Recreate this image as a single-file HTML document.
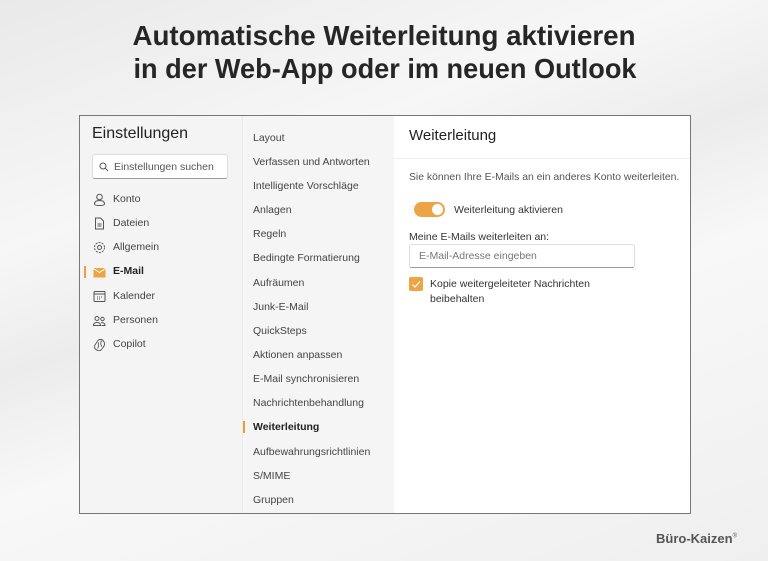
<!DOCTYPE html>
<html><head><meta charset="utf-8"><style>
*{margin:0;padding:0;box-sizing:border-box}
body{width:768px;height:561px;overflow:hidden;background:linear-gradient(160deg,#e9e9e9 0%,#f7f7f7 30%,#ececec 45%,#f8f8f8 60%,#efefef 100%);font-family:"Liberation Sans",sans-serif;position:relative;color:#333}
.abs{position:absolute}
.panel{left:79px;top:115px;width:612px;height:399px;border:1px solid #777;background:#f4f4f4}
.mid{left:162px;top:0;width:152px;height:397px;border-left:1px solid #ebebeb;background:#f5f5f5}
.right{left:314px;top:0;width:296px;height:397px;background:#fff}
.t{font-size:10.5px;color:#444;white-space:nowrap}
.ic{position:absolute;left:13px;width:13px;height:13px}
</style></head><body>
<svg class="abs" style="left:0;top:0" width="768" height="100">
<text x="384" y="45" text-anchor="middle" font-family="Liberation Sans" font-weight="bold" font-size="28" fill="#262626" textLength="503" lengthAdjust="spacingAndGlyphs">Automatische Weiterleitung aktivieren</text>
<text x="385" y="78" text-anchor="middle" font-family="Liberation Sans" font-weight="bold" font-size="28" fill="#262626" textLength="503" lengthAdjust="spacingAndGlyphs">in der Web-App oder im neuen Outlook</text>
</svg>
<div class="abs panel">
 <div class="abs" style="left:12px;top:9px;font-size:16px;color:#222">Einstellungen</div>
 <div class="abs" style="left:12px;top:38px;width:136px;height:25px;background:#fff;border:1px solid #ddd;border-bottom:1px solid #999;border-radius:3px">
  <svg class="abs" style="left:6px;top:7px" width="10" height="10"><circle cx="4" cy="4" r="3" fill="none" stroke="#555" stroke-width="1"/><path d="M6.3 6.3L9 9" stroke="#555"/></svg>
  <div class="abs t" style="left:21px;top:6px;color:#555">Einstellungen suchen</div>
 </div>
 <svg class="ic" style="top:77px" viewBox="0 0 13 13"><circle cx="6.5" cy="4" r="2.8" fill="none" stroke="#555"/><path d="M1.5 11c0-2.5 2-3.5 5-3.5s5 1 5 3.5c0 1-2 1.5-5 1.5s-5-.5-5-1.5z" fill="none" stroke="#555"/></svg>
 <div class="abs t" style="left:33px;top:77px">Konto</div>
 <svg class="ic" style="top:101px" viewBox="0 0 13 13"><path d="M2.5 1h5l3 3v8h-8z" fill="none" stroke="#555"/><path d="M4.5 7h4M4.5 9h4" stroke="#555"/></svg>
 <div class="abs t" style="left:33px;top:101px">Dateien</div>
 <svg class="ic" style="top:125px" viewBox="0 0 13 13"><circle cx="6.5" cy="6.5" r="2" fill="none" stroke="#555"/><circle cx="6.5" cy="6.5" r="5" fill="none" stroke="#555" stroke-dasharray="2 1.2"/></svg>
 <div class="abs t" style="left:33px;top:125px">Allgemein</div>
 <div class="abs" style="left:4px;top:150px;width:2px;height:12px;background:#e8a03c"></div>
 <svg class="ic" style="top:150px" viewBox="0 0 13 13"><rect x="0.5" y="2" width="12" height="9.5" fill="#eca444"/><path d="M0.5 2.5l6 4 6-4" fill="none" stroke="#fff"/></svg>
 <div class="abs t" style="left:33px;top:149px;font-weight:bold;color:#222">E-Mail</div>
 <svg class="ic" style="top:174px" viewBox="0 0 13 13"><rect x="1" y="1.5" width="11" height="10" rx="1" fill="none" stroke="#555"/><path d="M1 4h11M4 7h1M6 7h1M8 7h1M4 9h1M6 9h1" stroke="#555"/></svg>
 <div class="abs t" style="left:33px;top:174px">Kalender</div>
 <svg class="ic" style="top:198px" viewBox="0 0 13 13"><circle cx="4" cy="4.5" r="2" fill="none" stroke="#555"/><circle cx="9.5" cy="5" r="1.7" fill="none" stroke="#555"/><path d="M0.5 11.5c0-2 1.5-3 3.5-3s3.5 1 3.5 3zM8 8.5c2.5 0 4 .8 4 3h-3.5" fill="none" stroke="#555"/></svg>
 <div class="abs t" style="left:33px;top:198px">Personen</div>
 <svg class="ic" style="top:222px" viewBox="0 0 13 13"><path d="M3 11.5c-2-1-2-4 0-6l2-3c1-1.5 4-1.5 5 0 2 2 2 5 0 7l-2 2.5c-1 1-3.5 1-5-.5z M5 4.5c1 1 1 4-.5 6M8.5 2.5c-1 2-1 4.5.5 6" fill="none" stroke="#555" stroke-width=".9"/></svg>
 <div class="abs t" style="left:33px;top:222px">Copilot</div>
 <div class="abs mid">
  <div class="abs t" style="left:10px;top:16px">Layout</div>
  <div class="abs t" style="left:10px;top:40px">Verfassen und Antworten</div>
  <div class="abs t" style="left:10px;top:64px">Intelligente Vorschläge</div>
  <div class="abs t" style="left:10px;top:88px">Anlagen</div>
  <div class="abs t" style="left:10px;top:112px">Regeln</div>
  <div class="abs t" style="left:10px;top:136px">Bedingte Formatierung</div>
  <div class="abs t" style="left:10px;top:161px">Aufräumen</div>
  <div class="abs t" style="left:10px;top:185px">Junk-E-Mail</div>
  <div class="abs t" style="left:10px;top:209px">QuickSteps</div>
  <div class="abs t" style="left:10px;top:233px">Aktionen anpassen</div>
  <div class="abs t" style="left:10px;top:257px">E-Mail synchronisieren</div>
  <div class="abs t" style="left:10px;top:281px">Nachrichtenbehandlung</div>
  <div class="abs" style="left:0;top:305px;width:2px;height:12px;background:#e8a03c"></div>
  <div class="abs t" style="left:10px;top:305px;font-weight:bold;color:#222">Weiterleitung</div>
  <div class="abs t" style="left:10px;top:330px">Aufbewahrungsrichtlinien</div>
  <div class="abs t" style="left:10px;top:354px">S/MIME</div>
  <div class="abs t" style="left:10px;top:378px">Gruppen</div>
 </div>
 <div class="abs right">
  <div class="abs" style="left:15px;top:11px;font-size:15px;color:#222">Weiterleitung</div>
  <div class="abs" style="left:0;top:42px;width:296px;height:1px;background:#eee"></div>
  <div class="abs t" style="left:15px;top:56px;font-size:10.4px;color:#555">Sie können Ihre E-Mails an ein anderes Konto weiterleiten.</div>
  <div class="abs" style="left:20px;top:86px;width:31px;height:15px;border-radius:8px;background:#eca444"></div>
  <div class="abs" style="left:38px;top:88px;width:11px;height:11px;border-radius:6px;background:#fff"></div>
  <div class="abs t" style="left:60px;top:88px;color:#333">Weiterleitung aktivieren</div>
  <div class="abs t" style="left:15px;top:115px;color:#333">Meine E-Mails weiterleiten an:</div>
  <div class="abs" style="left:15px;top:128px;width:226px;height:24px;border:1px solid #ddd;border-bottom:1px solid #999;border-radius:3px;background:#fff"></div>
  <div class="abs t" style="left:25px;top:134px;color:#777">E-Mail-Adresse eingeben</div>
  <div class="abs" style="left:15px;top:161px;width:14px;height:14px;background:#eca444;border-radius:2px"></div>
  <svg class="abs" style="left:15px;top:161px" width="14" height="14"><path d="M3.5 7.5l2.5 2.5 5-5.5" fill="none" stroke="#fff" stroke-width="1.2"/></svg>
  <div class="abs t" style="left:36px;top:161px;color:#333;line-height:15px">Kopie weitergeleiteter Nachrichten<br>beibehalten</div>
 </div>
</div>
<div class="abs" style="left:656px;top:531px;font-size:13px;font-weight:bold;color:#555">Büro-Kaizen<sup style="font-size:6px;font-weight:normal">®</sup></div>
</body></html>
